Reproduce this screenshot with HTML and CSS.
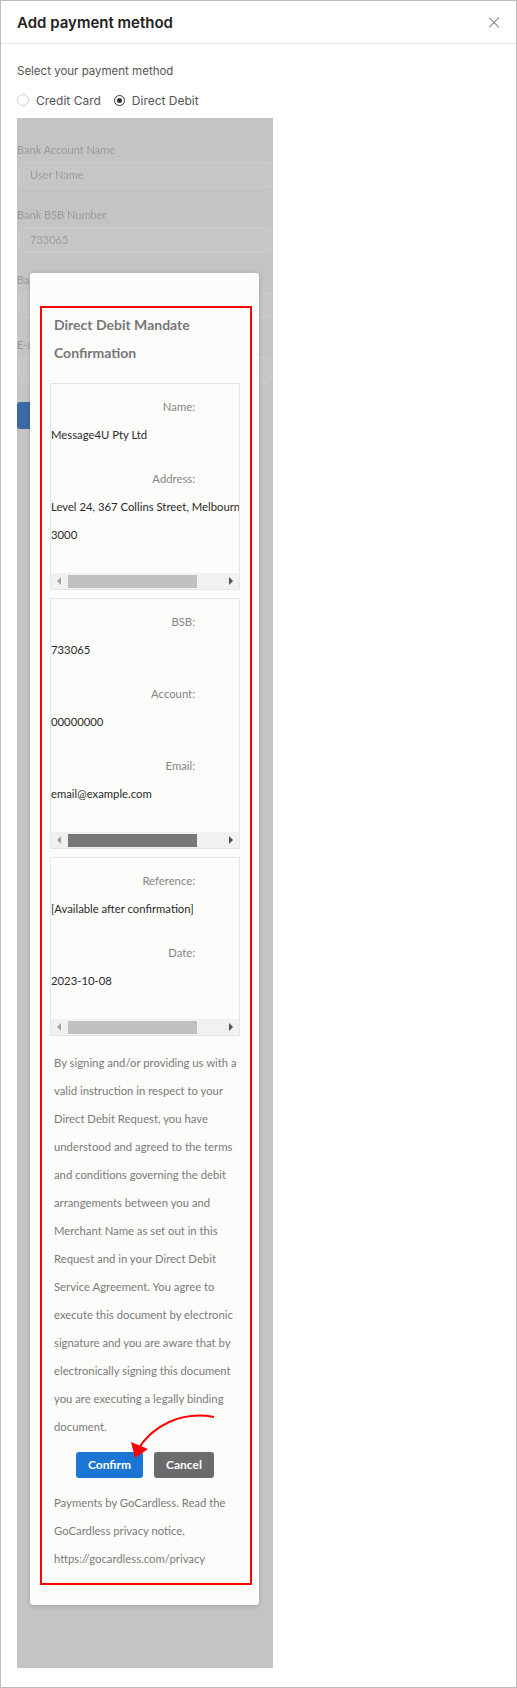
FILE: index.html
```html
<!DOCTYPE html>
<html lang="en">
<head>
	<meta charset="UTF-8">
	<title>Add payment method</title>
	<link rel="stylesheet" href="styles.css">
</head>
<body>
	<div class="dlg">
		<div class="hd">
			<h1>Add payment method</h1>
			<span class="x"></span>
		</div>
		<div class="bd">
			<p class="sel">Select your payment method</p>
			<div class="radios">
				<label class="rd"><i class="dot"></i>Credit Card</label>
				<label class="rd on"><i class="dot"></i>Direct Debit</label>
			</div>
			<div class="frame">
				<div class="form">
					<p class="lb">Bank Account Name</p>
					<div class="inp">User Name</div>
					<p class="lb">Bank BSB Number</p>
					<div class="inp">733065</div>
					<p class="lb">Bank Account Number</p>
					<div class="inp">00000000</div>
					<p class="lb">E-mail</p>
					<div class="inp">email@example.com</div>
					<div class="btn-b">Continue</div>
				</div>
				<div class="card">
					<div class="red">
						<h2>Direct Debit Mandate Confirmation</h2>
						<div class="box">
							<p class="k">Name:</p>
							<p class="v">Message4U Pty Ltd</p>
							<p class="k">Address:</p>
							<p class="v">Level 24, 367 Collins Street, Melbourne</p>
							<p class="v">3000</p>
							<div class="sb"><i class="al"></i><div class="trk"><i class="th"></i></div><i class="ar"></i></div>
						</div>
						<div class="box">
							<p class="k">BSB:</p>
							<p class="v">733065</p>
							<p class="k">Account:</p>
							<p class="v">00000000</p>
							<p class="k">Email:</p>
							<p class="v">email@example.com</p>
							<div class="sb"><i class="al"></i><div class="trk"><i class="th dk"></i></div><i class="ar"></i></div>
						</div>
						<div class="box">
							<p class="k">Reference:</p>
							<p class="v">[Available after confirmation]</p>
							<p class="k">Date:</p>
							<p class="v">2023-10-08</p>
							<div class="sb"><i class="al"></i><div class="trk"><i class="th"></i></div><i class="ar"></i></div>
						</div>
						<p class="txt">By signing and/or providing us with a valid instruction in respect to your Direct Debit Request, you have understood and agreed to the terms and conditions governing the debit arrangements between you and Merchant Name as set out in this Request and in your Direct Debit Service Agreement. You agree to execute this document by electronic signature and you are aware that by electronically signing this document you are executing a legally binding document.</p>
						<div class="acts">
							<svg class="arrow" width="208" height="60" viewBox="0 0 208 60">
								<path d="M172,10 C140,4 110,18 95,44" fill="none" stroke="#f00" stroke-width="2"/>
								<polygon points="93,51 89,35 106,42" fill="#f00"/>
							</svg>
							<span class="b ok">Confirm</span>
							<span class="b no">Cancel</span>
						</div>
						<p class="txt">Payments by GoCardless. Read the GoCardless privacy notice, https://gocardless.com/privacy</p>
					</div>
				</div>
			</div>
		</div>
	</div>
</body>
</html>
```

FILE: styles.css
```css
html,body{
	margin: 0px;
	padding: 0px;
	background: #fff;
}
.dlg{
	width: 517px;
	height: 1688px;
	box-sizing: border-box;
	border: 1px solid #bdbdbd;
	font-family: Inter, "Noto Sans", sans-serif;
}
.hd{
	height: 42px;
	border-bottom: 1px solid #e8e8e8;
	display: flex;
	align-items: center;
	justify-content: space-between;
	padding: 0 16px;
}
.hd h1{
	margin: 0;
	font-size: 15px;
	font-weight: 600;
	color: #222;
}
.x{
	position: relative;
	width: 11px;
	height: 11px;
	margin-right: 0px;
}
.x:before,.x:after{
	content: "";
	position: absolute;
	left: -2px;
	top: 5px;
	width: 14px;
	height: 1px;
	background: #888;
	transform: rotate(45deg);
}
.x:after{transform: rotate(-45deg);}
.bd{padding: 19px 16px 0 16px;}
.sel{
	margin: 0;
	font-size: 11.5px;
	line-height: 16px;
	color: #555;
}
.radios{
	display: flex;
	gap: 13px;
	margin-top: 13px;
	height: 16px;
	align-items: center;
}
.rd{
	display: flex;
	align-items: center;
	gap: 7px;
	font-size: 12px;
	color: #555;
}
.dot{
	width: 10px;
	height: 10px;
	border: 1px solid #cfcfcf;
	border-radius: 50%;
	position: relative;
}
.rd.on .dot{
	border: 1.5px solid #333;
	width: 9px;
	height: 9px;
}
.rd.on .dot:after{
	content: "";
	position: absolute;
	left: 2px;
	top: 2px;
	width: 5px;
	height: 5px;
	border-radius: 50%;
	background: #333;
}
.frame{
	margin-top: 10px;
	width: 256px;
	height: 1550px;
	background: #c4c4c4;
	position: relative;
	overflow: hidden;
}
.form{
	filter: blur(0.6px);
	padding-top: 24px;
	font-family: Lato, sans-serif;
}
.lb{
	margin: 0 0 4px 0;
	font-size: 11px;
	line-height: 16px;
	color: #9a9a9a;
}
.inp{
	margin: 0 2px 19px 2px;
	height: 26px;
	border: 1px solid #cdcdcd;
	border-radius: 3px;
	background: #c6c6c6;
	box-sizing: border-box;
	padding: 0 10px;
	line-height: 24px;
	font-size: 11px;
	color: #9c9c9c;
}
.btn-b{
	margin-top: 7px;
	width: 110px;
	height: 27px;
	box-sizing: border-box;
	padding-left: 24px;
	line-height: 27px;
	font-size: 11px;
	color: #b9c6d8;
	background: #3b6aa7;
	border-radius: 3px;
}
.card{
	position: absolute;
	left: 13px;
	top: 155px;
	width: 229px;
	box-sizing: border-box;
	padding: 33px 7px 20px 10px;
	background: #fcfcfa;
	border-radius: 3px;
	box-shadow: 0 1px 4px rgba(0,0,0,0.18);
	font-family: Lato, sans-serif;
}
.red{
	border: 2px solid #f00;
	padding: 3px 10px 10px 8px;
}
.red h2{
	margin: 0 0 16px 4px;
	font-size: 14px;
	line-height: 28px;
	font-weight: 700;
	color: #777;
	width: 170px;
}
.box{
	border: 1px solid #e6e6e6;
	background: #fcfcfa;
	padding-top: 9px;
	margin-bottom: 8px;
	overflow: hidden;
}
.box p{
	margin: 0;
	font-size: 11.3px;
	line-height: 28px;
	white-space: nowrap;
}
.k{
	width: 144px;
	text-align: right;
	color: #858585;
}
.v{color: #2a2a2a;}
.v + .k{margin-top: 16px;}
.sb{
	margin-top: 24px;
	height: 16px;
	background: #f1f1f1;
	display: flex;
	align-items: center;
}
.al,.ar{
	width: 17px;
	height: 16px;
	position: relative;
}
.al:after{
	content: "";
	position: absolute;
	left: 6px;
	top: 4px;
	border-top: 4px solid transparent;
	border-bottom: 4px solid transparent;
	border-right: 4px solid #a3a3a3;
}
.ar:after{
	content: "";
	position: absolute;
	left: 7px;
	top: 4px;
	border-top: 4px solid transparent;
	border-bottom: 4px solid transparent;
	border-left: 4px solid #505050;
}
.trk{flex: 1;}
.th{
	display: block;
	width: 129px;
	height: 13px;
	background: #c1c1c1;
}
.th.dk{background: #787878;}
.txt{
	margin: 13px 0 0 4px;
	font-size: 11.3px;
	line-height: 28px;
	color: #7a7a7a;
}
.acts{
	position: relative;
	display: flex;
	justify-content: center;
	gap: 11px;
	margin: 11px 0 11px 0;
}
.arrow{
	position: absolute;
	left: -8px;
	top: -45px;
}
.b{
	height: 26px;
	line-height: 26px;
	border-radius: 3px;
	font-size: 12px;
	font-weight: 700;
	color: #fff;
	text-align: center;
}
.ok{width: 67px;background: #1a76d2;}
.no{width: 60px;background: #6b6b6d;}
.acts + .txt{margin-top: 0;}
```
